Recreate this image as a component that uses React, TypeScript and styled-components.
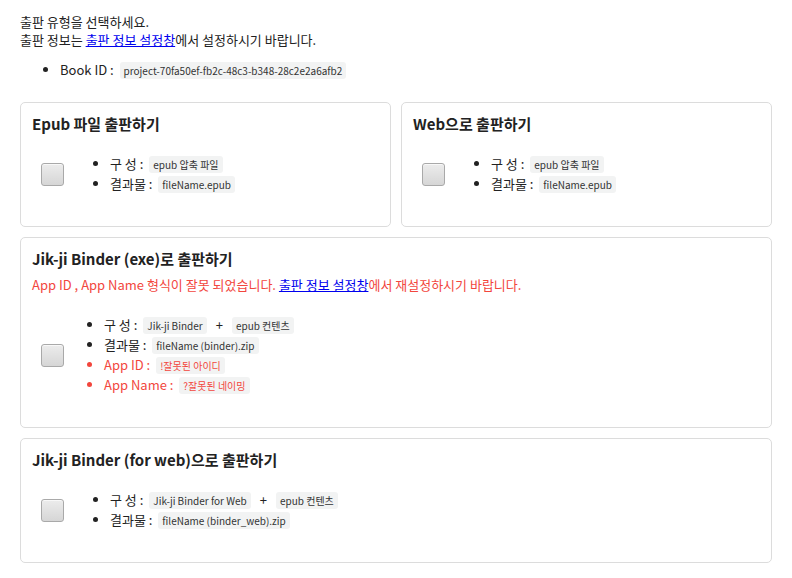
import React from "react";
import styled, { createGlobalStyle } from "styled-components";

const Global = createGlobalStyle`
  html, body { margin: 0; padding: 0; background: #fff; }
  body {
    font-family: "Noto Sans CJK KR", "Noto Sans", sans-serif;
    font-size: 13px;
    color: #222;
  }
`;

const Page = styled.div`
  padding: 13px 20px 0 19px;
`;

const Intro = styled.p`
  margin: 0 0 0 1px;
  line-height: 18px;
`;

const Link = styled.a`
  color: #0000ee;
  text-decoration: underline;
  cursor: pointer;
`;

const InfoList = styled.ul`
  margin: 11px 0 22px 0;
  padding-left: 41px;
  line-height: 20px;
`;

const Code = styled.code<{ $danger?: boolean }>`
  display: inline-block;
  font-family: "Noto Sans CJK KR", "Noto Sans", sans-serif;
  font-size: 10px;
  line-height: 17px;
  padding: 0 4px;
  margin-left: 3px;
  background: #f2f3f3;
  border-radius: 3px;
  color: ${(p) => (p.$danger ? "#f2463d" : "#333")};
`;

const Grid = styled.div`
  display: grid;
  grid-template-columns: 1fr 1fr;
  gap: 10px;
  margin: 0 0 10px 1px;
`;

const Card = styled.section`
  border: 1px solid #dcdcdc;
  border-radius: 5px;
  padding: 11px 12px 13px 11px;
  margin: 0 0 10px 1px;
  ${Grid} > & { margin: 0; }
`;

const Title = styled.h3`
  margin: 0;
  font-size: 15px;
  font-weight: bold;
  line-height: 20px;
  color: #222;
`;

const ErrorText = styled.p`
  margin: 6px 0 0 0;
  line-height: 20px;
  color: #f2463d;
`;

const Body = styled.div<{ $shift?: number }>`
  display: flex;
  align-items: center;
  padding: 20px 0 19px 9px;
  gap: ${(p) => 6 - (p.$shift ?? 0)}px;
`;

const CheckBox = styled.span`
  flex: none;
  width: 21px;
  height: 21px;
  border: 1px solid #a9a9a9;
  border-radius: 3px;
  background: linear-gradient(#ececec, #d6d6d6);
  box-shadow: inset 0 1px 0 #f8f8f8;
`;

const Items = styled.ul`
  margin: 0;
  padding-left: 40px;
  line-height: 20px;
`;

const Item = styled.li<{ $danger?: boolean }>`
  color: ${(p) => (p.$danger ? "#f2463d" : "#222")};
`;

const Plus = styled.span`
  margin: 0 6px 0 9px;
`;

export default function App() {
  return (
    <>
      <Global />
      <Page>
        <Intro>
          출판 유형을 선택하세요.
          <br />
          출판 정보는 <Link>출판 정보 설정창</Link>에서 설정하시기 바랍니다.
        </Intro>
        <InfoList>
          <li>
            Book ID : <Code>project-70fa50ef-fb2c-48c3-b348-28c2e2a6afb2</Code>
          </li>
        </InfoList>

        <Grid>
          <Card>
            <Title>Epub 파일 출판하기</Title>
            <Body>
              <CheckBox />
              <Items>
                <Item>
                  구 성 : <Code>epub 압축 파일</Code>
                </Item>
                <Item>
                  결과물 : <Code>fileName.epub</Code>
                </Item>
              </Items>
            </Body>
          </Card>
          <Card>
            <Title>Web으로 출판하기</Title>
            <Body>
              <CheckBox />
              <Items>
                <Item>
                  구 성 : <Code>epub 압축 파일</Code>
                </Item>
                <Item>
                  결과물 : <Code>fileName.epub</Code>
                </Item>
              </Items>
            </Body>
          </Card>
        </Grid>

        <Card>
          <Title>Jik-ji Binder (exe)로 출판하기</Title>
          <ErrorText>
            App ID , App Name 형식이 잘못 되었습니다. <Link>출판 정보 설정창</Link>에서 재설정하시기 바랍니다.
          </ErrorText>
          <Body $shift={6}>
            <CheckBox />
            <Items>
              <Item>
                구 성 : <Code>Jik-ji Binder</Code>
                <Plus>+</Plus>
                <Code>epub 컨텐츠</Code>
              </Item>
              <Item>
                결과물 : <Code>fileName (binder).zip</Code>
              </Item>
              <Item $danger>
                App ID : <Code $danger>!잘못된 아이디</Code>
              </Item>
              <Item $danger>
                App Name : <Code $danger>?잘못된 네이밍</Code>
              </Item>
            </Items>
          </Body>
        </Card>

        <Card>
          <Title>Jik-ji Binder (for web)으로 출판하기</Title>
          <Body>
            <CheckBox />
            <Items>
              <Item>
                구 성 : <Code>Jik-ji Binder for Web</Code>
                <Plus>+</Plus>
                <Code>epub 컨텐츠</Code>
              </Item>
              <Item>
                결과물 : <Code>fileName (binder_web).zip</Code>
              </Item>
            </Items>
          </Body>
        </Card>
      </Page>
    </>
  );
}
